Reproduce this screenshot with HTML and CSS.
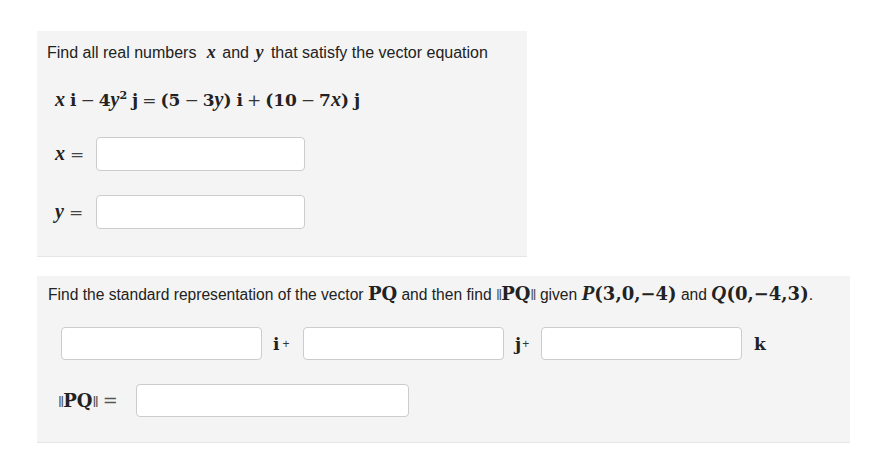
FILE: index.html
```html
<!DOCTYPE html>
<html>
<head>
<meta charset="utf-8">
<link rel="stylesheet" href="styles.css">
</head>
<body>
<div class="panel panel-one">
  <p class="question">Find all real numbers <span class="mv mv-x">x</span> and <span class="mv mv-y">y</span> that satisfy the vector equation</p>
  <div class="equation"><span class="mv">x</span><span class="mb sp-l">i</span><span class="op">−</span>4<span class="mv">y</span><sup class="sup">2</sup><span class="mb sp-l">j</span><span class="op">=</span>(5<span class="op">−</span>3<span class="mv">y</span>)<span class="mb sp-l">i</span><span class="op">+</span>(10<span class="op">−</span>7<span class="mv">x</span>)<span class="mb sp-l">j</span></div>
  <div class="answer-row">
    <span class="label"><span class="mv">x</span><span class="op">=</span></span>
    <input class="field field-xy" type="text">
  </div>
  <div class="answer-row">
    <span class="label"><span class="mv">y</span><span class="op">=</span></span>
    <input class="field field-xy" type="text">
  </div>
</div>

<div class="panel panel-two">
  <p class="question q2">Find the standard representation of the vector <span class="mbig">PQ</span> and then find <span class="norm">‖</span><span class="mbig">PQ</span><span class="norm">‖</span> given <span class="mbig"><span class="it">P</span>(3,0,−4)</span> and <span class="mbig"><span class="it">Q</span>(0,−4,3)</span>.</p>
  <div class="vec-row">
    <input class="field field-vec" type="text">
    <span class="unit"><span class="mb">i</span><span class="plus">+</span></span>
    <input class="field field-vec" type="text">
    <span class="unit unit-j"><span class="mb">j</span><span class="plus">+</span></span>
    <input class="field field-vec" type="text">
    <span class="unit unit-k"><span class="mb">k</span></span>
  </div>
  <div class="norm-row">
    <span class="norm-label"><span class="norm">‖</span><span class="mbig">PQ</span><span class="norm">‖</span><span class="op eq">=</span></span>
    <input class="field field-norm" type="text">
  </div>
</div>
</body>
</html>
```

FILE: styles.css
```css
html, body {
  margin: 0;
  padding: 0;
  background: #ffffff;
}

body {
  padding-top: 31px;
  padding-left: 37px;
  font-family: "Liberation Sans", Arial, sans-serif;
  color: #222222;
}

.panel {
  background: #f4f4f4;
  box-sizing: border-box;
  border-bottom: 1px solid #e6e6e6;
}

.panel-one {
  width: 490px;
  height: 226px;
  padding: 12px 10px 0 10px;
}

.panel-two {
  width: 813px;
  height: 167px;
  margin-top: 19px;
  padding: 8px 11px 0 11px;
}

.question {
  margin: 0;
  font-size: 16px;
  line-height: 18px;
  white-space: nowrap;
}

.mv {
  font-family: "Liberation Serif", "Times New Roman", serif;
  font-style: italic;
  font-weight: bold;
  font-size: 18px;
  line-height: 18px;
}

.mv-x {
  margin-left: 6px;
  margin-right: 2px;
}

.mv-y {
  margin-left: 2px;
  margin-right: 3px;
}

.mb {
  font-family: "DejaVu Serif", serif;
  font-weight: bold;
  font-style: normal;
}

.sp-l {
  margin-left: 5px;
}

.op {
  font-family: "DejaVu Serif", serif;
  font-weight: normal;
  margin: 0 4px;
  color: #333;
}

.sup {
  font-size: 11px;
  line-height: 0;
  vertical-align: 7px;
}

.equation {
  margin-top: 27px;
  margin-left: 8px;
  font-family: "DejaVu Serif", serif;
  font-weight: bold;
  font-size: 17px;
  line-height: 20px;
  height: 20px;
  white-space: nowrap;
}

.equation .mv {
  font-size: 20px;
  line-height: 20px;
}

.answer-row {
  display: flex;
  align-items: center;
  margin-top: 28px;
  margin-left: 8px;
}

.answer-row + .answer-row {
  margin-top: 24px;
}

.label {
  width: 41px;
  font-family: "DejaVu Serif", serif;
  font-size: 17px;
  white-space: nowrap;
}

.label .mv {
  font-size: 20px;
}

.label .op {
  color: #444;
  margin-left: 5px;
}

.field {
  box-sizing: border-box;
  background: #ffffff;
  border: 1px solid #cccccc;
  border-radius: 4px;
  margin: 0;
  padding: 0;
  outline: none;
}

.field-xy {
  width: 209px;
  height: 34px;
}

.q2 {
  font-size: 15.6px;
}

.mbig {
  font-family: "DejaVu Serif", serif;
  font-weight: bold;
  font-size: 18px;
  line-height: 18px;
}

.it {
  font-family: "Liberation Serif", "Times New Roman", serif;
  font-style: italic;
  font-size: 21px;
}

.norm {
  font-family: "Liberation Sans", Arial, sans-serif;
  font-weight: normal;
  font-size: 15px;
  line-height: 18px;
  color: #555;
  letter-spacing: -1px;
}

.vec-row {
  display: flex;
  align-items: center;
  margin-top: 23px;
  margin-left: 13px;
}

.field-vec {
  width: 201px;
  height: 33px;
}

.unit {
  display: flex;
  align-items: center;
  width: 41px;
  padding-left: 11px;
  box-sizing: border-box;
  font-size: 17px;
}

.unit-j {
  width: 37px;
}

.unit-k {
  padding-left: 12px;
}

.plus {
  font-family: "Liberation Sans", Arial, sans-serif;
  font-size: 12px;
  margin-left: 3px;
  color: #333;
}

.unit-j .plus {
  margin-left: 1px;
}

.norm-row {
  display: flex;
  align-items: center;
  margin-top: 24px;
  margin-left: 10px;
}

.norm-label {
  width: 78px;
  white-space: nowrap;
}

.norm-label .mbig {
  font-size: 18px;
}

.norm-label .eq {
  font-size: 18px;
  color: #555;
  margin-left: 5px;
}

.field-norm {
  width: 273px;
  height: 33px;
}
```
